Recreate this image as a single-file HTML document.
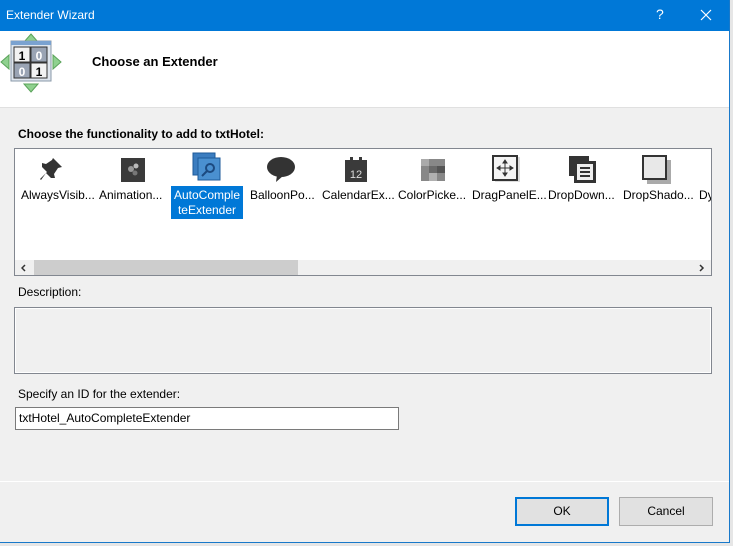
<!DOCTYPE html>
<html><head><meta charset="utf-8"><style>
*{margin:0;padding:0;box-sizing:border-box}
body{width:733px;height:546px;background:#e6e6e6;font-family:"Liberation Sans",sans-serif;font-size:12px;color:#000;position:relative;overflow:hidden}
.win{position:absolute;left:0;top:0;width:730px;height:543px;background:#f0f0f0;border-right:1px solid #1979ca;border-bottom:1px solid #1979ca}
.title{position:absolute;left:0;top:0;width:729px;height:31px;background:#0078d7;color:#fff;font-size:12px}
.hdr{position:absolute;left:0;top:31px;width:729px;height:77px;background:#fff;border-bottom:1px solid #e0e0e0}
.abs{position:absolute}
.list{position:absolute;left:14px;top:148px;width:698px;height:128px;background:#fff;border:1px solid #828790}
.item{position:absolute;top:39px;font-size:12px;white-space:nowrap}
.ico{position:absolute;top:6px}
.btn{position:absolute;top:497px;width:94px;height:29px;background:#e1e1e1;border:1px solid #adadad;text-align:center;line-height:27px;font-size:12px}
</style></head><body>
<div class="win">
<div class="title"><span class="abs" style="left:6px;top:8px">Extender Wizard</span>
<span class="abs" style="left:656px;top:6px;font-size:14px">?</span>
<svg class="abs" style="left:700px;top:9px" width="12" height="12"><path d="M1 1L11 11M11 1L1 11" stroke="#fff" stroke-width="1.2"/></svg></div>
<div class="hdr">
<svg class="abs" style="left:0;top:2px" width="62" height="60">
<g fill="#8fd18f" stroke="#5aa35a" stroke-width="1"><path d="M31 1L38 9H24Z"/><path d="M31 59L38 51H24Z"/><path d="M1 29L9 22V36Z"/><path d="M61 29L53 22V36Z"/></g>
<rect x="11" y="8" width="40" height="40" fill="#dfe6ee" stroke="#8a98a8"/>
<rect x="11" y="8" width="40" height="4" fill="#7aa2d0"/>
<rect x="14" y="14" width="16" height="15" fill="#f2f2f2" stroke="#333"/><rect x="31" y="14" width="16" height="15" fill="#9aa4b4" stroke="#333"/>
<rect x="14" y="30" width="16" height="15" fill="#9aa4b4" stroke="#333"/><rect x="31" y="30" width="16" height="15" fill="#f2f2f2" stroke="#333"/>
<text x="22" y="27" font-size="12" font-weight="bold" text-anchor="middle" font-family="Liberation Sans">1</text>
<text x="39" y="27" font-size="12" font-weight="bold" fill="#fff" text-anchor="middle" font-family="Liberation Sans">0</text>
<text x="22" y="43" font-size="12" font-weight="bold" fill="#fff" text-anchor="middle" font-family="Liberation Sans">0</text>
<text x="39" y="43" font-size="12" font-weight="bold" text-anchor="middle" font-family="Liberation Sans">1</text>
</svg>
<span class="abs" style="left:92px;top:23px;font-size:13px;font-weight:bold">Choose an Extender</span>
</div>
<span class="abs" style="left:18px;top:127px;font-weight:bold">Choose the functionality to add to txtHotel:</span>
<div class="list">
<svg class="ico" style="left:22px" width="28" height="28"><path d="M16 3L25 12L21 13L17 19L18 23L14 23L9 18L4 25L3 24L10 17L5 12L5 8L9 9L15 5Z" fill="#333"/></svg>
<svg class="ico" style="left:104px" width="28" height="28"><rect x="2" y="3" width="24" height="24" fill="#3a3a3a"/><circle cx="12" cy="14" r="3" fill="#999"/><circle cx="17" cy="11" r="2.5" fill="#bbb"/><circle cx="16" cy="18" r="2.5" fill="#777"/></svg>
<svg class="ico" style="left:177px;top:3px" width="30" height="30"><rect x="1" y="1" width="22" height="22" fill="#3b7dc0" stroke="#1c5a9a"/><rect x="6" y="6" width="22" height="22" fill="#4a90d0" stroke="#1c5a9a"/><circle cx="18" cy="16" r="4" fill="none" stroke="#1c4a80" stroke-width="2"/><path d="M15 19L10 24" stroke="#1c4a80" stroke-width="2"/></svg>
<svg class="ico" style="left:251px" width="30" height="28"><ellipse cx="15" cy="12" rx="14" ry="10" fill="#333"/><path d="M11 20L10 27L17 21Z" fill="#333"/></svg>
<svg class="ico" style="left:328px" width="28" height="28"><rect x="2" y="5" width="22" height="22" fill="#3a3a3a"/><rect x="7" y="2" width="3" height="6" fill="#3a3a3a"/><rect x="16" y="2" width="3" height="6" fill="#3a3a3a"/><text x="13" y="23" font-size="11" fill="#ddd" text-anchor="middle" font-family="Liberation Sans">12</text></svg>
<svg class="ico" style="left:404px" width="28" height="28"><rect x="2" y="4" width="24" height="22" fill="#888"/><rect x="2" y="4" width="8" height="7" fill="#aaa"/><rect x="18" y="11" width="8" height="7" fill="#555"/><rect x="10" y="18" width="8" height="8" fill="#b0b0b0"/><rect x="10" y="11" width="8" height="7" fill="#6a6a6a"/></svg>
<svg class="ico" style="left:477px" width="30" height="30"><rect x="3" y="2" width="25" height="25" fill="#ddd"/><rect x="1" y="1" width="24" height="24" fill="#f4f4f4" stroke="#333" stroke-width="2"/><path d="M13 6V20M6 13H20M13 5L11 8H15ZM13 21L11 18H15ZM5 13L8 11V15ZM21 13L18 11V15Z" stroke="#333" fill="#333"/></svg>
<svg class="ico" style="left:553px" width="30" height="30"><rect x="1" y="1" width="20" height="20" fill="#333"/><rect x="6" y="6" width="22" height="22" fill="#333"/><rect x="9" y="9" width="16" height="16" fill="#eee"/><path d="M12 13H22M12 17H22M12 21H22" stroke="#333" stroke-width="2"/></svg>
<svg class="ico" style="left:627px" width="30" height="30"><rect x="5" y="5" width="24" height="24" fill="#aaa"/><rect x="1" y="1" width="23" height="23" fill="#e8e8e8" stroke="#333" stroke-width="2"/></svg>
<div class="item" style="left:6px">AlwaysVisib...</div>
<div class="item" style="left:84px">Animation...</div>
<div class="item" style="left:156px;top:37px;background:#0078d7;color:#fff;width:72px;height:33px;text-align:center;line-height:15px;padding-top:2px;white-space:normal">AutoComple<br>teExtender</div>
<div class="item" style="left:235px">BalloonPo...</div>
<div class="item" style="left:307px">CalendarEx...</div>
<div class="item" style="left:383px">ColorPicke...</div>
<div class="item" style="left:457px">DragPanelE...</div>
<div class="item" style="left:533px">DropDown...</div>
<div class="item" style="left:608px">DropShado...</div>
<div class="item" style="left:684px;width:12px;overflow:hidden">Dy</div>
<div class="abs" style="left:0;top:111px;width:696px;height:15px;background:#f0f0f0"></div>
<div class="abs" style="left:19px;top:111px;width:264px;height:15px;background:#cdcdcd"></div>
<svg class="abs" style="left:6px;top:115px" width="6" height="8"><path d="M4 1L1 4L4 7" stroke="#333" stroke-width="1.5" fill="none"/></svg>
<svg class="abs" style="left:684px;top:115px" width="6" height="8"><path d="M1 1L4 4L1 7" stroke="#333" stroke-width="1.5" fill="none"/></svg>
</div>
<span class="abs" style="left:18px;top:285px">Description:</span>
<div class="abs" style="left:14px;top:307px;width:698px;height:67px;border:1px solid #828790;box-shadow:inset 0 0 0 1px #fff"></div>
<span class="abs" style="left:18px;top:387px">Specify an ID for the extender:</span>
<div class="abs" style="left:15px;top:407px;width:384px;height:23px;background:#fff;border:1px solid #7a7a7a;padding:3px 0 0 3px">txtHotel_AutoCompleteExtender</div>
<div class="abs" style="left:0;top:481px;width:729px;height:1px;background:#fff"></div>
<div class="btn" style="left:515px;border:2px solid #0078d7;line-height:25px">OK</div>
<div class="btn" style="left:619px">Cancel</div>
</div>
</body></html>
